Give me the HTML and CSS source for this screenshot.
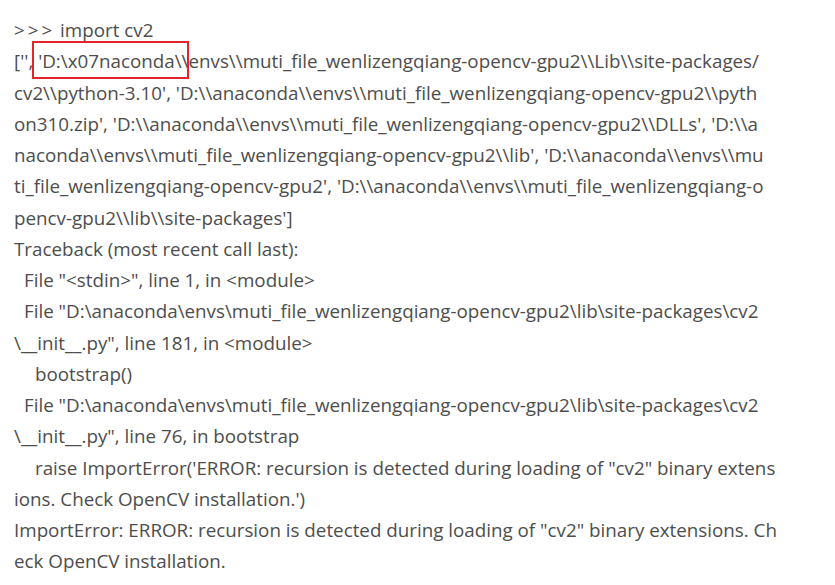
FILE: index.html
```html
<!DOCTYPE html>
<html>
<head>
<meta charset="utf-8">
<link rel="stylesheet" href="styles.css">
</head>
<body>
<div class="console">
<div class="ln"><span class="prompt">&gt;&gt;&gt;</span> import cv2</div>
<div class="ln">['', <span class="hl">'D:\x07naconda\\</span>envs\\muti_file_wenlizengqiang-opencv-gpu2\\Lib\\site-packages/</div>
<div class="ln">cv2\\python-3.10', 'D:\\anaconda\\envs\\muti_file_wenlizengqiang-opencv-gpu2\\pyth</div>
<div class="ln">on310.zip', 'D:\\anaconda\\envs\\muti_file_wenlizengqiang-opencv-gpu2\\DLLs', 'D:\\a</div>
<div class="ln">naconda\\envs\\muti_file_wenlizengqiang-opencv-gpu2\\lib', 'D:\\anaconda\\envs\\mu</div>
<div class="ln">ti_file_wenlizengqiang-opencv-gpu2', 'D:\\anaconda\\envs\\muti_file_wenlizengqiang-o</div>
<div class="ln">pencv-gpu2\\lib\\site-packages']</div>
<div class="ln">Traceback (most recent call last):</div>
<div class="ln in1">File "&lt;stdin&gt;", line 1, in &lt;module&gt;</div>
<div class="ln in1">File "D:\anaconda\envs\muti_file_wenlizengqiang-opencv-gpu2\lib\site-packages\cv2</div>
<div class="ln">\__init__.py", line 181, in &lt;module&gt;</div>
<div class="ln in2">bootstrap()</div>
<div class="ln in1">File "D:\anaconda\envs\muti_file_wenlizengqiang-opencv-gpu2\lib\site-packages\cv2</div>
<div class="ln">\__init__.py", line 76, in bootstrap</div>
<div class="ln in2">raise ImportError('ERROR: recursion is detected during loading of "cv2" binary extens</div>
<div class="ln">ions. Check OpenCV installation.')</div>
<div class="ln">ImportError: ERROR: recursion is detected during loading of "cv2" binary extensions. Ch</div>
<div class="ln">eck OpenCV installation.</div>
</div>
</body>
</html>
```
FILE: styles.css
```css
html, body {
  margin: 0;
  padding: 0;
  background: #ffffff;
}
.console {
  padding: 15px 0 0 14px;
  font-family: "Open Sans", "Noto Sans", sans-serif;
  font-size: 18.8px;
  line-height: 31.25px;
  color: #4d4d4d;
}
.ln {
  white-space: nowrap;
}
.prompt {
  letter-spacing: 3px;
}
.in1 {
  padding-left: 10px;
}
.in2 {
  padding-left: 21px;
}
.hl {
  position: relative;
}
.hl::before {
  content: "";
  position: absolute;
  left: -6px;
  right: -1px;
  top: -7px;
  bottom: -5px;
  border: 2px solid #e3242b;
}
```
